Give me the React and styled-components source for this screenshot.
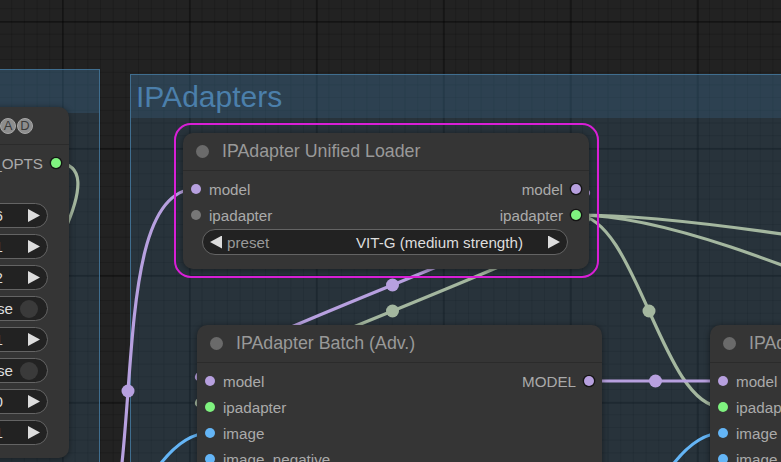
import React from 'react';
import styled, { createGlobalStyle, css } from 'styled-components';

const Global = createGlobalStyle`
  html, body { margin: 0; padding: 0; background: #222; overflow: hidden; }
  body { font-family: "Liberation Sans", Arial, sans-serif; }
`;

const Canvas = styled.div`
  position: relative;
  width: 781px;
  height: 462px;
  overflow: hidden;
  background-color: #222;
  background-image:
    linear-gradient(to right, rgba(0,0,0,0.3) 0 2px, transparent 2px),
    linear-gradient(to bottom, rgba(0,0,0,0.3) 0 2px, transparent 2px),
    linear-gradient(to right, rgba(0,0,0,0.16) 0 1px, transparent 1px),
    linear-gradient(to bottom, rgba(0,0,0,0.16) 0 1px, transparent 1px);
  background-size: 127px 127px, 127px 127px, 12.7px 12.7px, 12.7px 12.7px;
  background-position: 62px 21px, 62px 21px, 11.2px 8.3px, 11.2px 8.3px;
  font-family: "Liberation Sans", Arial, sans-serif;
`;

const Group = styled.div`
  position: absolute;
  left: ${p => p.$x}px;
  top: ${p => p.$y}px;
  width: ${p => p.$w}px;
  height: ${p => p.$h}px;
  box-sizing: border-box;
  background: rgba(63, 120, 158, 0.2);
  border: 1px solid rgba(70, 125, 165, 0.8);
  display: flex;
  flex-direction: column;
`;

const GroupTitle = styled.div`
  height: ${p => p.$h}px;
  line-height: ${p => p.$h}px;
  flex: none;
  background: rgba(63, 120, 158, 0.22);
  color: #4b7fab;
  font-size: 30px;
  padding-left: 5px;
  white-space: nowrap;
`;

const Links = styled.svg`
  position: absolute;
  left: 0;
  top: 0;
  width: 781px;
  height: 462px;
  overflow: visible;
  pointer-events: none;
`;

const NodeBox = styled.div`
  position: absolute;
  left: ${p => p.$x}px;
  top: ${p => p.$y}px;
  width: ${p => p.$w}px;
  height: ${p => p.$h}px;
  background: #353535;
  border-radius: 10px;
  box-shadow: 0 1px 6px rgba(0, 0, 0, 0.45);
  display: flex;
  flex-direction: column;
  color: #aaa;
  font-size: 15.2px;
  ${p => p.$selected && css`
    &::after {
      content: '';
      position: absolute;
      left: -9px;
      top: -10px;
      right: -10px;
      bottom: -9px;
      border: 2.4px solid #d81fd6;
      border-radius: 17px;
      pointer-events: none;
    }
  `}
`;

const TitleBar = styled.div`
  height: 38px;
  flex: none;
  box-sizing: border-box;
  display: flex;
  align-items: center;
  justify-content: ${p => (p.$end ? 'flex-end' : 'flex-start')};
  gap: 13px;
  padding: ${p => (p.$end ? '0 36px 0 0' : '0 0 0 13px')};
  border-bottom: 1px solid #2b2b2b;
  color: #999;
  font-size: 17.8px;
  white-space: nowrap;
  overflow: hidden;
`;

const TitleDot = styled.span`
  width: 13px;
  height: 13px;
  border-radius: 50%;
  background: #6a6a6a;
  flex: none;
`;

const Badges = styled.span`
  display: inline-flex;
  gap: 1px;
`;

const Badge = styled.span`
  width: 16px;
  height: 16px;
  box-sizing: border-box;
  border-radius: 50%;
  background: #8d8d8d;
  border: 1.5px solid #a8a8a8;
  color: #3a3a3a;
  font-size: 13px;
  display: flex;
  align-items: center;
  justify-content: center;
`;

const Body = styled.div`
  display: flex;
  flex-direction: column;
  padding-top: 5px;
  flex: 1;
  overflow: hidden;
`;

const SlotRow = styled.div`
  height: 26px;
  flex: none;
  display: flex;
  align-items: center;
  justify-content: space-between;
  padding: 0 8px;
  white-space: nowrap;
`;

const Side = styled.div`
  display: flex;
  align-items: center;
  gap: 8px;
`;

const Dot = styled.span`
  width: 10px;
  height: 10px;
  border-radius: 50%;
  flex: none;
  background: ${p => p.$c};
  ${p => p.$ring && css`box-shadow: 0 0 0 1.3px #141414;`}
`;

const Widgets = styled.div`
  display: flex;
  flex-direction: column;
  gap: ${p => p.$gap}px;
  margin-top: 1px;
`;

const Pill = styled.div`
  height: ${p => p.$h}px;
  box-sizing: border-box;
  margin: 0 21px 0 19px;
  border: 1px solid #646464;
  border-radius: 14px;
  background: #222;
  display: flex;
  align-items: center;
  padding: 0 7px;
  gap: 5px;
  font-size: 15.2px;
  white-space: nowrap;
`;

const WLabel = styled.span`
  color: #999;
  flex: 1;
  min-width: 0;
  overflow: hidden;
`;

const WValue = styled.span`
  color: #ddd;
  flex: none;
  margin-right: ${p => p.$gap}px;
`;

const Arrow = styled.span`
  width: 12px;
  height: 13px;
  flex: none;
  background: #ddd;
  clip-path: ${p => (p.$dir === 'left'
    ? 'polygon(0 50%, 100% 0, 100% 100%)'
    : 'polygon(0 0, 100% 50%, 0 100%)')};
`;

const Knob = styled.span`
  width: 18px;
  height: 18px;
  border-radius: 50%;
  background: #3a3a3a;
  margin-right: 2px;
  flex: none;
`;

const C = {
  model: '#b7a0df',
  ipa: '#7ff27f',
  ipaLink: '#a4b79f',
  image: '#64b5f6',
  off: '#777',
};

function bez(x1, y1, x2, y2) {
  const d = Math.hypot(x2 - x1, y2 - y1) * 0.25;
  const c1x = x1 + d, c2x = x2 - d;
  const mx = 0.125 * x1 + 0.375 * c1x + 0.375 * c2x + 0.125 * x2;
  const my = 0.5 * y1 + 0.5 * y2;
  return { d: `M${x1} ${y1} C${c1x} ${y1} ${c2x} ${y2} ${x2} ${y2}`, mx, my };
}

const linkData = [
  [60, 593, 196, 189, C.model],
  [576, 189, 209, 381, C.model],
  [576, 215, 209, 407, C.ipaLink],
  [576, 215, 722, 407, C.ipaLink],
  [576, 215, 1400, 320, C.ipaLink],
  [576, 215, 1250, 420, C.ipaLink],
  [589, 381, 722, 381, C.model],
  [0, 700, 209, 433, C.image],
  [513, 700, 722, 433, C.image],
  [56, 163, -100, 600, C.ipaLink],
];

function LinkLayer() {
  return (
    <Links viewBox="0 0 781 462">
      {linkData.map(([x1, y1, x2, y2, col], i) => {
        const b = bez(x1, y1, x2, y2);
        return (
          <g key={i}>
            <path d={b.d} fill="none" stroke={col} strokeWidth="3.2" strokeLinecap="round" />
            <circle cx={b.mx} cy={b.my} r="6.5" fill={col} />
          </g>
        );
      })}
    </Links>
  );
}

function Slot({ inLabel, inColor, outLabel, outColor }) {
  return (
    <SlotRow>
      <Side>
        {inLabel && <Dot $c={inColor} />}
        {inLabel && <span>{inLabel}</span>}
      </Side>
      <Side>
        {outLabel && <span>{outLabel}</span>}
        {outLabel && <Dot $c={outColor} $ring />}
      </Side>
    </SlotRow>
  );
}

function NumberWidget({ label, value }) {
  return (
    <Pill $h={25}>
      <Arrow $dir="left" />
      <WLabel>{label}</WLabel>
      <WValue $gap={20}>{value}</WValue>
      <Arrow $dir="right" />
    </Pill>
  );
}

function ToggleWidget({ label }) {
  return (
    <Pill $h={25}>
      <WLabel>{label}</WLabel>
      <WValue $gap={2}>false</WValue>
      <Knob />
    </Pill>
  );
}

export default function App() {
  return (
    <Canvas>
      <Global />
      <Group $x={-10} $y={69} $w={110} $h={420}>
        <GroupTitle $h={43}> </GroupTitle>
      </Group>
      <Group $x={130} $y={74} $w={720} $h={420}>
        <GroupTitle $h={43}>IPAdapters</GroupTitle>
      </Group>

      <LinkLayer />

      <NodeBox $x={-260} $y={107} $w={329} $h={351}>
        <TitleBar $end>
          <span>Context Options◆Looped Uniform 🎭</span>
          <Badges>
            <Badge>A</Badge>
            <Badge>D</Badge>
          </Badges>
        </TitleBar>
        <Body>
          <Slot inLabel="prev_context" inColor={C.off} outLabel="CONTEXT_OPTS" outColor={C.ipa} />
          <Slot inLabel="view_opts" inColor={C.off} />
          <Widgets $gap={6}>
            <NumberWidget label="context_length" value="16" />
            <NumberWidget label="context_stride" value="1" />
            <NumberWidget label="context_overlap" value="2" />
            <ToggleWidget label="closed_loop" />
            <NumberWidget label="fuse_method" value="1" />
            <ToggleWidget label="use_on_equal_length" />
            <NumberWidget label="start_percent" value="0" />
            <NumberWidget label="guarantee_steps" value="1" />
          </Widgets>
        </Body>
      </NodeBox>

      <NodeBox $x={183} $y={133} $w={406} $h={136} $selected>
        <TitleBar>
          <TitleDot />
          <span>IPAdapter Unified Loader</span>
        </TitleBar>
        <Body>
          <Slot inLabel="model" inColor={C.model} outLabel="model" outColor={C.model} />
          <Slot inLabel="ipadapter" inColor={C.off} outLabel="ipadapter" outColor={C.ipa} />
          <Widgets $gap={0}>
            <Pill $h={26}>
              <Arrow $dir="left" />
              <WLabel>preset</WLabel>
              <WValue $gap={20}>VIT-G (medium strength)</WValue>
              <Arrow $dir="right" />
            </Pill>
          </Widgets>
        </Body>
      </NodeBox>

      <NodeBox $x={197} $y={325} $w={405} $h={300}>
        <TitleBar>
          <TitleDot />
          <span>IPAdapter Batch (Adv.)</span>
        </TitleBar>
        <Body>
          <Slot inLabel="model" inColor={C.model} outLabel="MODEL" outColor={C.model} />
          <Slot inLabel="ipadapter" inColor={C.ipa} />
          <Slot inLabel="image" inColor={C.image} />
          <Slot inLabel="image_negative" inColor={C.image} />
        </Body>
      </NodeBox>

      <NodeBox $x={710} $y={325} $w={405} $h={300}>
        <TitleBar>
          <TitleDot />
          <span>IPAdapter Advanced</span>
        </TitleBar>
        <Body>
          <Slot inLabel="model" inColor={C.model} outLabel="MODEL" outColor={C.model} />
          <Slot inLabel="ipadapter" inColor={C.ipa} />
          <Slot inLabel="image" inColor={C.image} />
          <Slot inLabel="image_negative" inColor={C.image} />
        </Body>
      </NodeBox>
    </Canvas>
  );
}
